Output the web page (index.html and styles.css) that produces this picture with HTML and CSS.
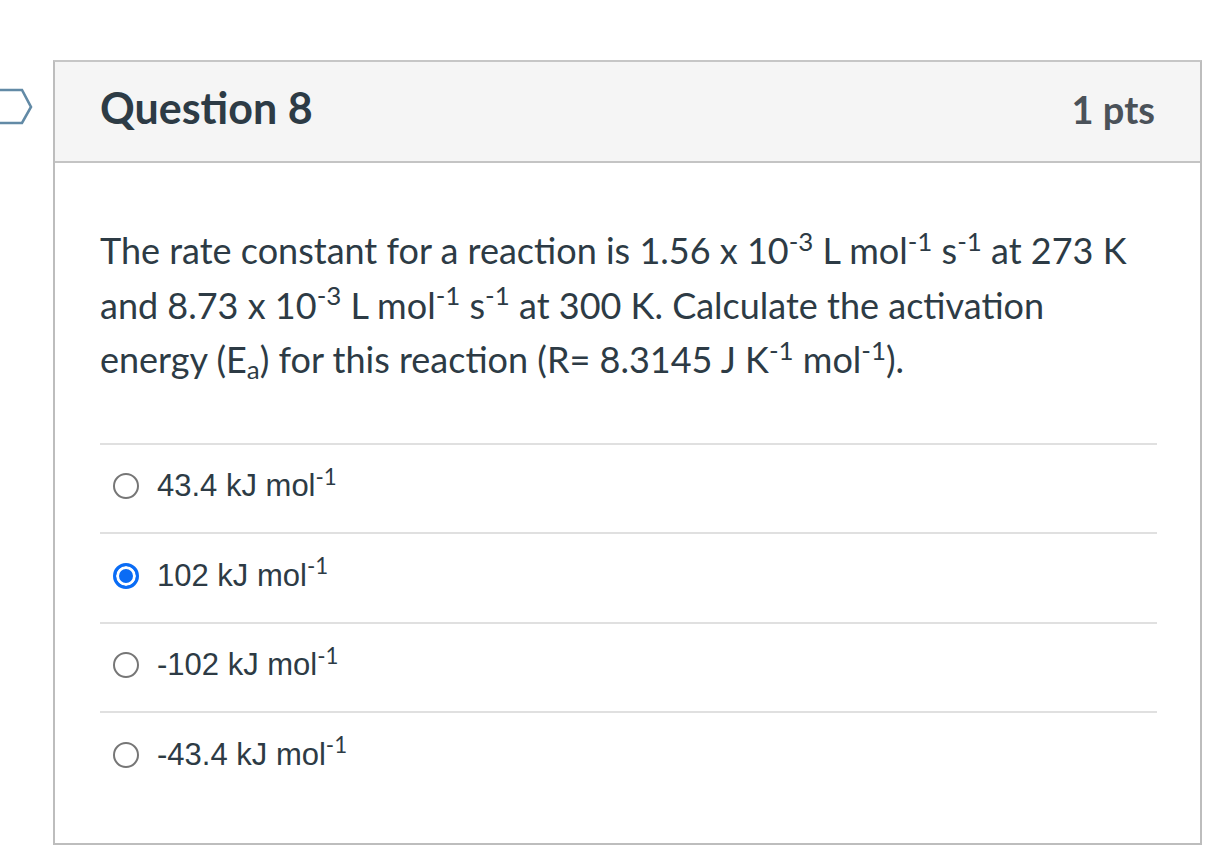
FILE: index.html
```html
<!DOCTYPE html>
<html lang="en">
<head>
<meta charset="utf-8">
<title>Question 8</title>
<link rel="stylesheet" href="styles.css">
</head>
<body>
<div class="page">
  <div class="flag-col">
    <svg class="flag" width="36" height="40" viewBox="0 0 36 40" aria-hidden="true">
      <path d="M-3 2 H22 L31 19 L22 35 H-3" fill="none" stroke="#628aa6" stroke-width="2.6" stroke-linejoin="miter"/>
    </svg>
  </div>
  <div class="card">
    <div class="card-header">
      <h2 class="title">Question 8</h2>
      <span class="points">1 pts</span>
    </div>
    <div class="card-body">
      <p class="question">The rate constant for a reaction is 1.56 x 10<sup>-3</sup> L mol<sup>-1</sup> s<sup>-1</sup> at 273 K and 8.73 x 10<sup>-3</sup> L mol<sup>-1</sup> s<sup>-1</sup> at 300 K. Calculate the activation energy (E<sub>a</sub>) for this reaction (R= 8.3145 J K<sup>-1</sup> mol<sup>-1</sup>).</p>
      <div class="answers">
        <div class="answer"><span class="radio"></span><span class="label">43.4 kJ mol<sup>-1</sup></span></div>
        <div class="answer"><span class="radio checked"></span><span class="label">102 kJ mol<sup>-1</sup></span></div>
        <div class="answer"><span class="radio"></span><span class="label">-102 kJ mol<sup>-1</sup></span></div>
        <div class="answer"><span class="radio"></span><span class="label">-43.4 kJ mol<sup>-1</sup></span></div>
      </div>
    </div>
  </div>
</div>
</body>
</html>
```

FILE: styles.css
```css
html, body {
  margin: 0;
  padding: 0;
  background: #ffffff;
}

body {
  font-family: Lato, "Liberation Sans", sans-serif;
  color: #2d3b45;
}

.page {
  display: flex;
  align-items: flex-start;
  padding-top: 60px;
  width: 1206px;
}

.flag-col {
  flex: 0 0 53px;
  padding-top: 28px;
}

.flag {
  display: block;
}

.card {
  width: 1149px;
  box-sizing: border-box;
  border: 2px solid #bdbdbd;
  border-top-color: #c6c6c6;
  background: #ffffff;
}

.card-header {
  box-sizing: border-box;
  height: 101px;
  padding: 20px 45px 0 45px;
  background: #f5f5f5;
  border-bottom: 2px solid #c4c4c4;
  display: flex;
  justify-content: space-between;
  align-items: baseline;
}

.title {
  margin: 0;
  font-family: Lato, sans-serif;
  font-weight: 700;
  font-size: 43px;
  line-height: normal;
  color: #2d3b45;
}

.points {
  font-family: Lato, sans-serif;
  font-weight: 700;
  font-size: 38px;
  line-height: normal;
  color: #4b5259;
}

.card-body {
  padding: 60px 43px 42px 45px;
}

.question {
  margin: 0;
  font-size: 36px;
  line-height: 54.5px;
  color: #2d3b45;
}

sup, sub {
  font-size: 72%;
  line-height: 0;
  position: relative;
  vertical-align: baseline;
}

sup {
  top: -0.52em;
}

sub {
  top: 0.25em;
}

.answers {
  margin-top: 56px;
}

.answer {
  box-sizing: border-box;
  height: 89.5px;
  border-top: 2px solid #e0e0e0;
  display: flex;
  align-items: center;
  padding-left: 13px;
  padding-bottom: 4px;
}

.radio {
  box-sizing: border-box;
  flex: 0 0 26px;
  width: 26px;
  height: 26px;
  border: 2px solid #767676;
  border-radius: 50%;
  background: #ffffff;
}

.radio.checked {
  border: 3px solid #0a6cf5;
  background: #0a6cf5;
  box-shadow: inset 0 0 0 3px #ffffff;
}

.label {
  margin-left: 18px;
  font-family: "Liberation Sans", Arial, sans-serif;
  font-size: 31px;
  color: #2d3b45;
}

.label sup {
  font-family: Lato, sans-serif;
  font-size: 72%;
  top: -0.52em;
}
```
